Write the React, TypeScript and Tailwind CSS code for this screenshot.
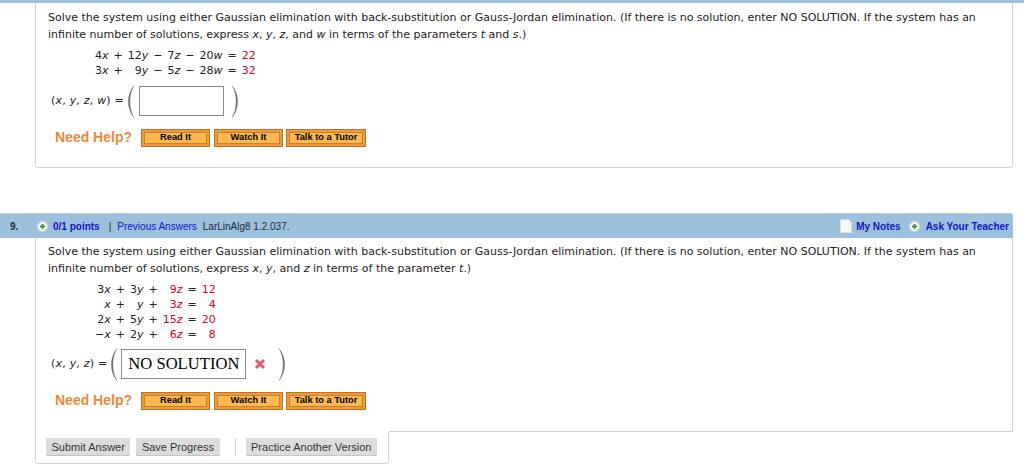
import * as React from 'react';

const font = "font-['DejaVu_Sans',Verdana,sans-serif]";

function Eq({ cells }: { cells: [string, string, boolean?][] }) {
  return (
    <>
      {cells.map(([num, v, red], i) => (
        <span key={i} className={`text-right ${red ? 'text-[#e0001b]' : ''}`}>
          {num}
          {v && <i>{v}</i>}
        </span>
      ))}
    </>
  );
}

function HelpRow() {
  const btn =
    "h-[18px] border border-[#b8732c] bg-[#f0993a] p-[2px] flex font-['Liberation_Sans',Arial,sans-serif] text-[9.3px] font-bold text-black";
  const inner = 'flex-1 flex items-center justify-center bg-[#fdb94f] border border-[#c9802f]';
  return (
    <div className="flex items-center h-[18px]">
      <span className="ml-[7px] w-[86px] pb-[1px] font-['Liberation_Sans',Arial,sans-serif] text-[14px] font-bold text-[#f0883a]">
        Need Help?
      </span>
      <div className={`${btn} w-[69px]`}>
        <div className={inner}>Read It</div>
      </div>
      <div className={`${btn} w-[69px] ml-[4px]`}>
        <div className={inner}>Watch It</div>
      </div>
      <div className={`${btn} w-[80px] ml-[3px]`}>
        <div className={inner}>Talk to a Tutor</div>
      </div>
    </div>
  );
}

function Paren({ right }: { right?: boolean }) {
  return (
    <svg width="9" height="33" viewBox="0 0 9 33" className="shrink-0 block">
      <path
        d={right ? 'M1 0.5 C8.5 9 8.5 24 1 32.5 C6.5 24 6.5 9 1 0.5Z' : 'M8 0.5 C0.5 9 0.5 24 8 32.5 C2.5 24 2.5 9 8 0.5Z'}
        fill="#666"
        stroke="#777"
        strokeWidth="0.4"
      />
    </svg>
  );
}

function PlusDot() {
  return (
    <svg width="11" height="11" viewBox="0 0 11 11" className="shrink-0 block">
      <circle cx="5.5" cy="5.5" r="5" fill="#f2f2f2" stroke="#cfd6dc" />
      <path d="M5.5 3v5M3 5.5h5" stroke="#1f8a1f" strokeWidth="1.6" />
    </svg>
  );
}

export default function App() {
  return (
    <div className={`w-[1024px] h-[470px] overflow-hidden bg-white text-[#222] ${font}`}>
      <div className="h-[3px] bg-[#9dc0dc]" />

      <div className="ml-[35px] w-[978px] h-[165px] border-x border-b border-[#d2d2d2] rounded-b-[3px] pl-[12px]">
        <p className="pt-[6px] text-[11px] leading-[17px] whitespace-pre">
          Solve the system using either Gaussian elimination with back-substitution or Gauss-Jordan elimination. (If
          there is no solution, enter NO SOLUTION. If the system has an{'\n'}infinite number of solutions, express{' '}
          <i>x</i>, <i>y</i>, <i>z</i>, and <i>w</i> in terms of the parameters <i>t</i> and <i>s</i>.)
        </p>
        <div className="mt-[5px] ml-[47px] grid grid-cols-[repeat(9,auto)] gap-x-[5px] w-fit text-[11px] leading-[15px]">
          <Eq cells={[['4', 'x'], ['+', ''], ['12', 'y'], ['−', ''], ['7', 'z'], ['−', ''], ['20', 'w'], ['=', ''], ['22', '', true]]} />
          <Eq cells={[['3', 'x'], ['+', ''], ['9', 'y'], ['−', ''], ['5', 'z'], ['−', ''], ['28', 'w'], ['=', ''], ['32', '', true]]} />
        </div>
        <div className="mt-[7px] ml-[3px] flex items-center text-[11px] tracking-[0.2px] h-[32px]">
          <span>
            (<i>x</i>, <i>y</i>, <i>z</i>, <i>w</i>) =
          </span>
          <span className="ml-[2px]"><Paren /></span>
          <div className="ml-[4px] w-[85px] h-[30px] border border-[#8a8a8a]" />
          <span className="ml-[7px]"><Paren right /></span>
        </div>
        <div className="mt-[12px]">
          <HelpRow />
        </div>
      </div>

      <div className="mt-[45px] w-[1013px] h-[25px] bg-[#9dc0dc] border-t border-[#c9c9c9] rounded-tr-[3px] flex items-center font-['Liberation_Sans',Arial,sans-serif] text-[10px]">
        <b className="ml-[10px] w-[27px] text-[#1c2b3a]">9.</b>
        <PlusDot />
        <b className="ml-[5px] text-[#1414c8]">0/1 points</b>
        <span className="ml-[9px] text-[#1c2b3a]">|</span>
        <span className="ml-[6px] text-[#1414c8]">Previous Answers</span>
        <span className="ml-[6px] text-[#1c2b3a]">LarLinAlg8 1.2.037.</span>
        <svg width="12" height="14" viewBox="0 0 12 14" className="ml-auto shrink-0">
          <path d="M0.5 0.5h8l3 3v10h-11z" fill="#f7f7f7" stroke="#d5dde3" />
        </svg>
        <b className="ml-[4px] text-[#1414c8]">My Notes</b>
        <span className="ml-[8px]"><PlusDot /></span>
        <b className="ml-[6px] mr-[4px] text-[#1414c8]">Ask Your Teacher</b>
      </div>

      <div className="ml-[35px] w-[978px] h-[194px] border-r border-l border-[#d2d2d2] pl-[12px]">
        <p className="pt-[5px] text-[11px] leading-[17px] whitespace-pre">
          Solve the system using either Gaussian elimination with back-substitution or Gauss-Jordan elimination. (If
          there is no solution, enter NO SOLUTION. If the system has an{'\n'}infinite number of solutions, express{' '}
          <i>x</i>, <i>y</i>, and <i>z</i> in terms of the parameter <i>t</i>.)
        </p>
        <div className="mt-[5px] ml-[47px] grid grid-cols-[repeat(7,auto)] gap-x-[5px] w-fit text-[11px] leading-[15px]">
          <Eq cells={[['3', 'x'], ['+', ''], ['3', 'y'], ['+', ''], ['9', 'z', true], ['=', ''], ['12', '', true]]} />
          <Eq cells={[['', 'x'], ['+', ''], ['', 'y'], ['+', ''], ['3', 'z', true], ['=', ''], ['4', '', true]]} />
          <Eq cells={[['2', 'x'], ['+', ''], ['5', 'y'], ['+', ''], ['15', 'z', true], ['=', ''], ['20', '', true]]} />
          <Eq cells={[['−', 'x'], ['+', ''], ['2', 'y'], ['+', ''], ['6', 'z', true], ['=', ''], ['8', '', true]]} />
        </div>
        <div className="mt-[6px] ml-[3px] flex items-center text-[11px] tracking-[0.2px] h-[32px]">
          <span>
            (<i>x</i>, <i>y</i>, <i>z</i>) =
          </span>
          <span className="ml-[2px]"><Paren /></span>
          <div className="ml-[3px] w-[125px] h-[30px] border border-[#8a8a8a] flex items-center justify-center font-['Liberation_Serif',serif] tracking-normal text-[16.6px] text-black">
            NO SOLUTION
          </div>
          <svg width="12" height="12" viewBox="0 0 12 12" className="ml-[8px] shrink-0">
            <path d="M2 2l8 8M10 2l-8 8" stroke="#ee5a5f" strokeWidth="3" />
          </svg>
          <span className="ml-[12px]"><Paren right /></span>
        </div>
        <div className="mt-[12px]">
          <HelpRow />
        </div>
      </div>

      <div className="flex w-[1013px]">
        <div className="ml-[35px] w-[354px] h-[32px] border-l border-r border-b border-[#d2d2d2] rounded-b-[3px] pl-[10px] pt-[6px] flex items-start font-['Liberation_Sans',Arial,sans-serif] text-[11px] text-[#333]">
          <div className="h-[18px] px-[5.5px] pt-px bg-[#dcdcdc] border-b border-[#c4c4c4] flex items-center">Submit Answer</div>
          <div className="ml-[6px] h-[18px] px-[5.5px] pt-px bg-[#dcdcdc] border-b border-[#c4c4c4] flex items-center">Save Progress</div>
          <div className="ml-[15px] h-[18px] w-px bg-[#d2d2d2]" />
          <div className="ml-[10px] h-[18px] px-[5.5px] pt-px bg-[#dcdcdc] border-b border-[#c4c4c4] flex items-center">Practice Another Version</div>
        </div>
        <div className="flex-1 h-px bg-[#d2d2d2] -mt-px" />
      </div>
    </div>
  );
}
